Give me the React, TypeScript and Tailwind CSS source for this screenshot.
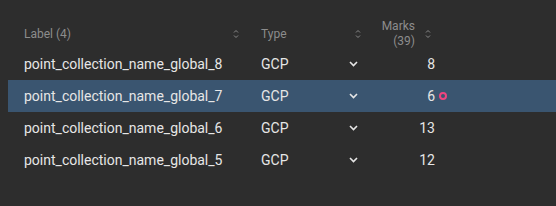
import React from 'react';

const rows = [
  { label: 'point_collection_name_global_8', type: 'GCP', marks: 8, selected: false, flag: false },
  { label: 'point_collection_name_global_7', type: 'GCP', marks: 6, selected: true, flag: true },
  { label: 'point_collection_name_global_6', type: 'GCP', marks: 13, selected: false, flag: false },
  { label: 'point_collection_name_global_5', type: 'GCP', marks: 12, selected: false, flag: false },
];

const SortIcon = () => (
  <svg width="6" height="10" viewBox="0 0 6 10" fill="none" stroke="#8a8a8a" strokeWidth="1">
    <path d="M1 3.5 L3 1.5 L5 3.5" />
    <path d="M1 6.5 L3 8.5 L5 6.5" />
  </svg>
);

const Chevron = () => (
  <svg width="9" height="6" viewBox="0 0 9 6" fill="none" stroke="#e6e6e6" strokeWidth="1.6">
    <path d="M1 1 L4.5 4.5 L8 1" />
  </svg>
);

export default function App() {
  return (
    <div className="w-[556px] h-[206px] bg-[#2d2d2d] pt-4 font-['Roboto',sans-serif] overflow-hidden">
      <div className="ml-2">
        {/* header */}
        <div className="grid grid-cols-[237px_125px_90px] h-8 pt-[3px] items-center text-[12px] text-[#8c8c8c]">
          <div className="flex items-center justify-between pl-4 pr-[6px]">
            <span>Label (4)</span>
            <SortIcon />
          </div>
          <div className="flex items-center justify-between pl-4 pr-[9px]">
            <span>Type</span>
            <SortIcon />
          </div>
          <div className="flex items-center justify-end gap-[10px] pr-[29px]">
            <span className="text-right leading-[15px]">
              Marks
              <br />
              (39)
            </span>
            <SortIcon />
          </div>
        </div>
        {/* rows */}
        {rows.map((r) => (
          <div
            key={r.label}
            className={`grid grid-cols-[237px_125px_90px_1fr] h-8 items-center text-[14px] text-[#e6e6e6] ${r.selected ? 'bg-[#3a5570]' : ''}`}
          >
            <div className="pl-4">{r.label}</div>
            <div className="flex items-center justify-between pl-4 pr-3">
              <span>{r.type}</span>
              <Chevron />
            </div>
            <div className="flex items-center justify-end">
              <span>{r.marks}</span>
              <div className="w-[25px] pl-1 flex items-center">
                {r.flag && <span className="w-2 h-2 rounded-full border-2 border-[#f0457f]" />}
              </div>
            </div>
          </div>
        ))}
      </div>
    </div>
  );
}
